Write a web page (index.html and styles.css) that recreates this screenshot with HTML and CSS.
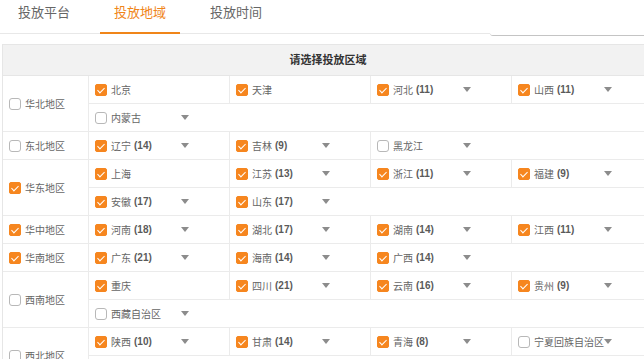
FILE: index.html
```html
<!DOCTYPE html>
<html>
<head>
    <meta charset="UTF-8">
    <title>投放地域</title>
    <link rel="stylesheet" href="styles.css">
</head>
<body>

<div class="topbar">
    <div class="tabs">
        <a href="javascript:;" class="tab">投放平台</a>
        <a href="javascript:;" class="tab on">投放地域</a>
        <a href="javascript:;" class="tab">投放时间</a>
    </div>
    <div class="search"></div>
</div>

<div class="area">
    <div class="area-head">请选择投放区域</div>

    <div class="region">
        <div class="region-name"><span class="cb"></span>华北地区</div>
        <div class="provinces">
            <div class="line">
                <div class="prov"><span class="cb on"></span>北京</div>
                <div class="prov"><span class="cb on"></span>天津</div>
                <div class="prov"><span class="cb on"></span>河北<b>(11)</b><i class="arr"></i></div>
                <div class="prov"><span class="cb on"></span>山西<b>(11)</b><i class="arr"></i></div>
            </div>
            <div class="line">
                <div class="prov"><span class="cb"></span>内蒙古<i class="arr"></i></div>
            </div>
        </div>
    </div>

    <div class="region">
        <div class="region-name"><span class="cb"></span>东北地区</div>
        <div class="provinces">
            <div class="line">
                <div class="prov"><span class="cb on"></span>辽宁<b>(14)</b><i class="arr"></i></div>
                <div class="prov"><span class="cb on"></span>吉林<b>(9)</b><i class="arr"></i></div>
                <div class="prov"><span class="cb"></span>黑龙江<i class="arr"></i></div>
            </div>
        </div>
    </div>

    <div class="region">
        <div class="region-name"><span class="cb on"></span>华东地区</div>
        <div class="provinces">
            <div class="line">
                <div class="prov"><span class="cb on"></span>上海</div>
                <div class="prov"><span class="cb on"></span>江苏<b>(13)</b><i class="arr"></i></div>
                <div class="prov"><span class="cb on"></span>浙江<b>(11)</b><i class="arr"></i></div>
                <div class="prov"><span class="cb on"></span>福建<b>(9)</b><i class="arr"></i></div>
            </div>
            <div class="line">
                <div class="prov"><span class="cb on"></span>安徽<b>(17)</b><i class="arr"></i></div>
                <div class="prov"><span class="cb on"></span>山东<b>(17)</b><i class="arr"></i></div>
            </div>
        </div>
    </div>

    <div class="region">
        <div class="region-name"><span class="cb on"></span>华中地区</div>
        <div class="provinces">
            <div class="line">
                <div class="prov"><span class="cb on"></span>河南<b>(18)</b><i class="arr"></i></div>
                <div class="prov"><span class="cb on"></span>湖北<b>(17)</b><i class="arr"></i></div>
                <div class="prov"><span class="cb on"></span>湖南<b>(14)</b><i class="arr"></i></div>
                <div class="prov"><span class="cb on"></span>江西<b>(11)</b><i class="arr"></i></div>
            </div>
        </div>
    </div>

    <div class="region">
        <div class="region-name"><span class="cb on"></span>华南地区</div>
        <div class="provinces">
            <div class="line">
                <div class="prov"><span class="cb on"></span>广东<b>(21)</b><i class="arr"></i></div>
                <div class="prov"><span class="cb on"></span>海南<b>(14)</b><i class="arr"></i></div>
                <div class="prov"><span class="cb on"></span>广西<b>(14)</b><i class="arr"></i></div>
            </div>
        </div>
    </div>

    <div class="region">
        <div class="region-name"><span class="cb"></span>西南地区</div>
        <div class="provinces">
            <div class="line">
                <div class="prov"><span class="cb on"></span>重庆</div>
                <div class="prov"><span class="cb on"></span>四川<b>(21)</b><i class="arr"></i></div>
                <div class="prov"><span class="cb on"></span>云南<b>(16)</b><i class="arr"></i></div>
                <div class="prov"><span class="cb on"></span>贵州<b>(9)</b><i class="arr"></i></div>
            </div>
            <div class="line">
                <div class="prov"><span class="cb"></span>西藏自治区<i class="arr"></i></div>
            </div>
        </div>
    </div>

    <div class="region">
        <div class="region-name"><span class="cb"></span>西北地区</div>
        <div class="provinces">
            <div class="line">
                <div class="prov"><span class="cb on"></span>陕西<b>(10)</b><i class="arr"></i></div>
                <div class="prov"><span class="cb on"></span>甘肃<b>(14)</b><i class="arr"></i></div>
                <div class="prov"><span class="cb on"></span>青海<b>(8)</b><i class="arr"></i></div>
                <div class="prov"><span class="cb"></span>宁夏回族自治区<i class="arr"></i></div>
            </div>
            <div class="line"></div>
        </div>
    </div>
</div>

</body>
</html>
```

FILE: styles.css
```css
html,body,div{margin:0;padding:0;}
html,body {
    overflow: hidden;
    background: #fff;
}
body {
    font-family: "Liberation Sans", "Noto Sans CJK SC", sans-serif;
    font-size: 10px;
    color: #666;
}
.topbar {
    display: flex;
    align-items: flex-start;
}
.tabs {
    display: flex;
    align-items: flex-start;
    width: 486px;
    height: 33px;
    padding-left: 4px;
    border-bottom: 1px solid #e8e8e8;
}
.tab {
    display: block;
    height: 32px;
    line-height: 25px;
    padding: 0 14px;
    margin-right: 16px;
    font-size: 13px;
    color: #666;
    text-decoration: none;
}
.tab.on {
    color: #f08519;
    border-bottom: 2px solid #f08519;
}
.search {
    flex: 1;
    height: 35px;
    border-bottom: 1px solid #c4c4c4;
    border-bottom-left-radius: 3px;
}
.area {
    width: 650px;
    margin: 8px 0 0 2px;
    border: 1px solid #e6e6e6;
}
.area-head {
    height: 30px;
    line-height: 30px;
    text-align: center;
    font-size: 11px;
    font-weight: bold;
    color: #333;
    background: #f2f2f2;
    border-bottom: 1px solid #e6e6e6;
}
.region {
    display: flex;
    border-bottom: 1px solid #ebebeb;
}
.region-name {
    display: flex;
    align-items: center;
    width: 79px;
    padding-left: 6px;
    border-right: 1px solid #ebebeb;
}
.provinces {
    flex: 1;
    margin-left: -1px;
}
.line {
    display: flex;
    height: 27px;
}
.line + .line {
    border-top: 1px solid #ebebeb;
}
.prov {
    display: flex;
    align-items: center;
    box-sizing: border-box;
    width: 141px;
    padding-left: 6px;
    border-left: 1px solid #ebebeb;
    white-space: nowrap;
}
.prov b {
    margin-left: 3px;
    color: #5a5a5a;
}
.cb {
    position: relative;
    box-sizing: border-box;
    width: 12px;
    height: 12px;
    margin-right: 4px;
    border: 1px solid #b8b8b8;
    border-radius: 3px;
    background: #fff;
    flex: none;
}
.cb.on {
    border-color: #f6861f;
    background: #f6861f;
    border-radius: 2px;
}
.cb.on:after {
    content: "";
    position: absolute;
    left: 3px;
    top: 1px;
    width: 3px;
    height: 6px;
    border: solid #fff;
    border-width: 0 1px 1px 0;
    transform: rotate(45deg);
}
.arr {
    width: 0;
    height: 0;
    margin-left: auto;
    margin-right: 40px;
    border-left: 4.5px solid transparent;
    border-right: 4.5px solid transparent;
    border-top: 5px solid #8c8c8c;
    flex: none;
}
```
